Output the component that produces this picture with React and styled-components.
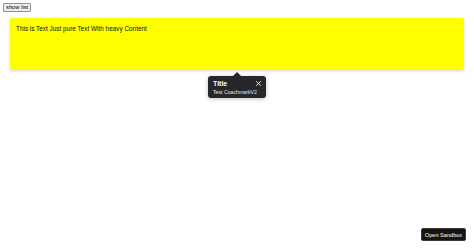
import React, { useState } from "react"
import styled, { createGlobalStyle } from "styled-components"

const GlobalStyle = createGlobalStyle`
  html, body {
    margin: 0;
    padding: 0;
    background: #ffffff;
    font-family: "Liberation Sans", Arial, sans-serif;
  }
`

const Page = styled.div`
  position: relative;
  width: 474px;
  height: 248px;
  padding: 3px 10px 0 3px;
  box-sizing: border-box;
`

const ListButton = styled.button`
  display: block;
  height: 9px;
  padding: 0 2px;
  font-family: "Liberation Sans", Arial, sans-serif;
  font-size: 5.8px;
  line-height: 7px;
  color: #000;
  background: #efefef;
  border: 1px solid #8f8f8f;
  border-radius: 1px;
`

const Card = styled.div`
  margin: 6px 0 0 7px;
  height: 52px;
  background: #ffff00;
  border-radius: 2px;
  box-shadow: 0 1px 3px rgba(0, 0, 0, 0.18);
  padding: 7px 6px;
  box-sizing: border-box;
  font-size: 6.4px;
  color: #111;
`

const Anchor = styled.div`
  display: flex;
  justify-content: center;
  margin: 6px 0 0 7px;
`

const Coach = styled.div`
  position: relative;
  width: 58px;
  height: 22px;
  background: #25272b;
  border-radius: 3px;
  box-shadow: 0 1px 4px rgba(0, 0, 0, 0.25);
  padding: 3px 5px;
  box-sizing: border-box;
  color: #fff;

  &::before {
    content: "";
    position: absolute;
    top: -4px;
    left: 50%;
    margin-left: -4px;
    border-left: 4px solid transparent;
    border-right: 4px solid transparent;
    border-bottom: 4px solid #25272b;
  }
`

const CoachHead = styled.div`
  display: flex;
  justify-content: space-between;
  align-items: center;
  height: 9px;
`

const CoachTitle = styled.span`
  font-size: 7px;
  font-weight: 700;
`

const CloseButton = styled.span`
  display: flex;
  align-items: center;
  cursor: pointer;
`

const CoachText = styled.div`
  font-size: 5.2px;
  margin-top: 1px;
  color: #e6e6e6;
`

const Sandbox = styled.button`
  position: absolute;
  right: 8px;
  bottom: 7px;
  width: 45px;
  height: 13px;
  padding: 0;
  background: #151515;
  color: #fff;
  border: 1px solid #3a3a3a;
  border-radius: 2px;
  font-family: "Liberation Sans", Arial, sans-serif;
  font-size: 5.6px;
`

const CloseIcon = () => (
  <svg width="5" height="5" viewBox="0 0 10 10" style={{ display: "block" }}>
    <path d="M1 1L9 9M9 1L1 9" stroke="#fff" strokeWidth="1.8" strokeLinecap="round" />
  </svg>
)

export default function App() {
  const [open, setOpen] = useState(true)
  return (
    <Page>
      <GlobalStyle />
      <ListButton>show list</ListButton>
      <Card>This is Text Just pure Text With heavy Content</Card>
      <Anchor>
        {open && (
          <Coach>
            <CoachHead>
              <CoachTitle>Title</CoachTitle>
              <CloseButton onClick={() => setOpen(false)}>
                <CloseIcon />
              </CloseButton>
            </CoachHead>
            <CoachText>Test CoachmarkV2</CoachText>
          </Coach>
        )}
      </Anchor>
      <Sandbox>Open Sandbox</Sandbox>
    </Page>
  )
}
